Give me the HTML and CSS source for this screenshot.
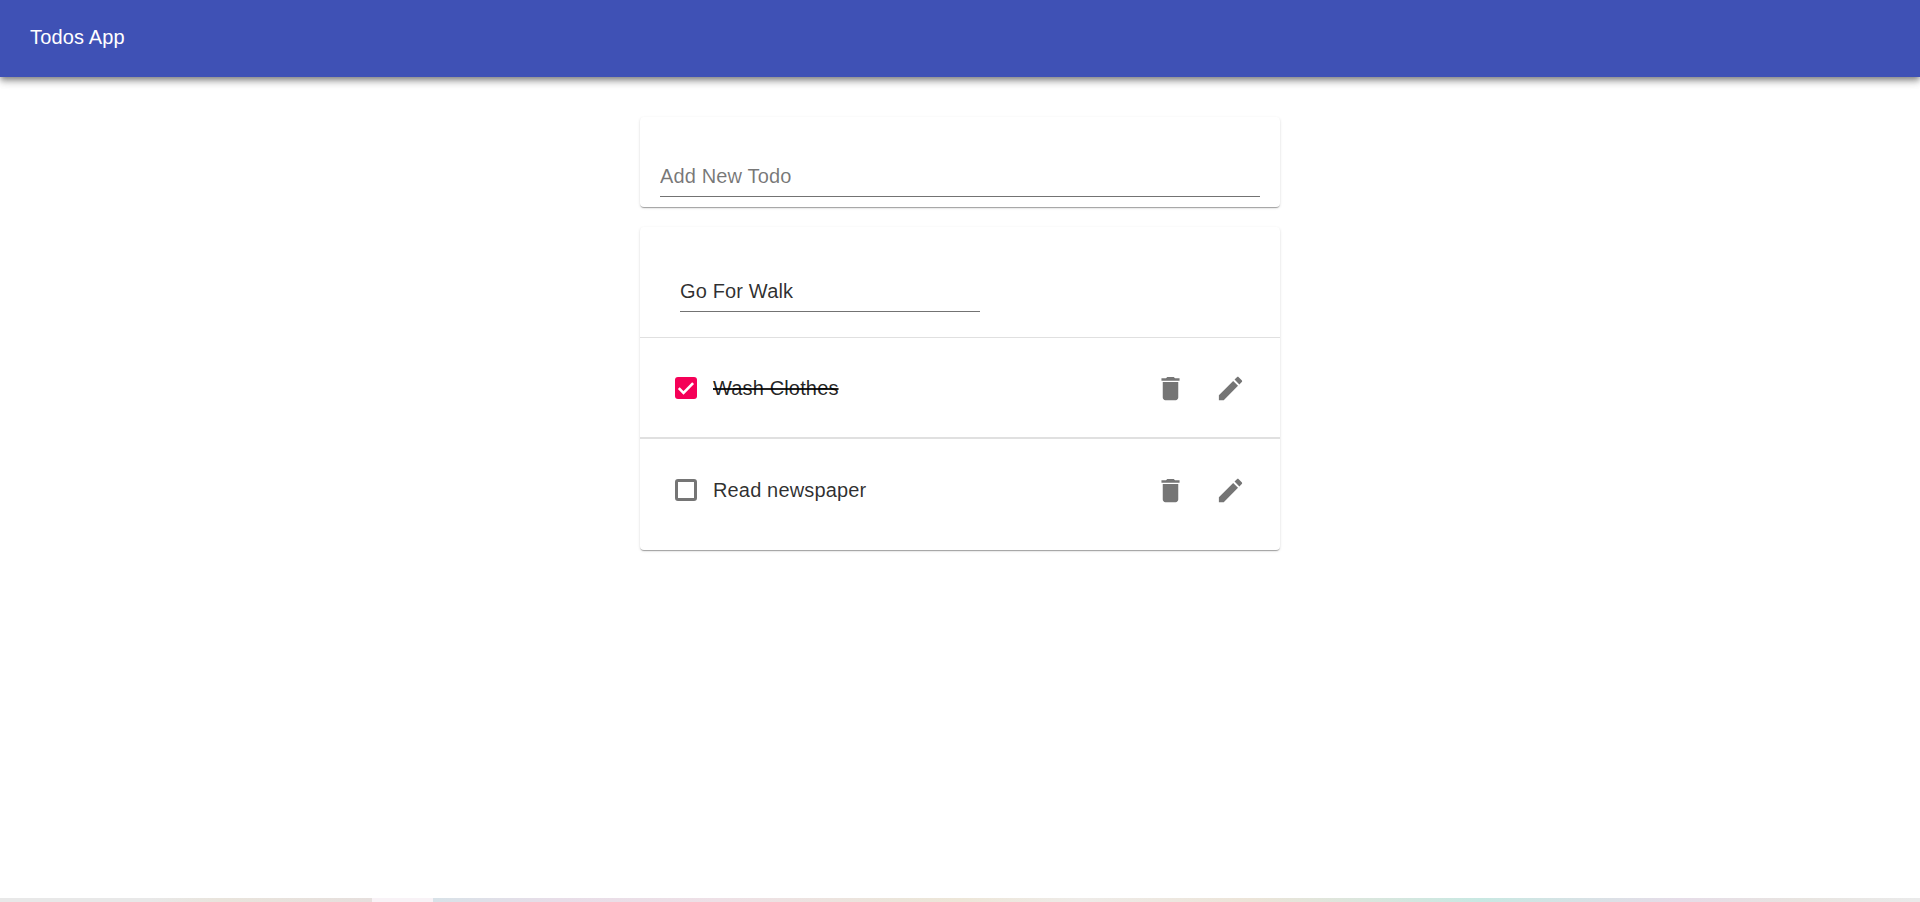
FILE: index.html
```html
<!DOCTYPE html>
<html lang="en">
<head>
<meta charset="utf-8">
<title>Todos App</title>
<link rel="stylesheet" href="styles.css">
</head>
<body>
<div class="page">
  <header class="appbar"><h1 class="appbar-title">Todos App</h1></header>
  <main class="content">
    <section class="card add-card">
      <input class="text-input" type="text" placeholder="Add New Todo">
    </section>
    <section class="card list-card">
      <div class="row edit-row">
        <input class="text-input edit-input" type="text" value="Go For Walk">
      </div>
      <div class="row todo-row">
        <span class="checkbox checked">
          <svg viewBox="0 0 22 22"><path d="M3.800 11.200l4.700 4.700 9.600-9.800" fill="none" stroke="#fff" stroke-width="2.600"/></svg>
        </span>
        <span class="todo-text done">Wash Clothes</span>
        <span class="actions">
          <svg class="icon" viewBox="0 0 24 24"><path d="M6 19c0 1.100.9 2 2 2h8c1.100 0 2-.9 2-2V7H6v12zM19 4h-3.500l-1-1h-5l-1 1H5v2h14V4z"/></svg>
          <svg class="icon" viewBox="0 0 24 24"><path d="M3 17.250V21h3.750L17.810 9.940l-3.750-3.750L3 17.250zM20.710 7.040c.39-.39.39-1.020 0-1.410l-2.340-2.340c-.39-.39-1.020-.39-1.410 0l-1.830 1.830 3.750 3.750 1.830-1.830z"/></svg>
        </span>
      </div>
      <div class="row todo-row last">
        <span class="checkbox"></span>
        <span class="todo-text">Read newspaper</span>
        <span class="actions">
          <svg class="icon" viewBox="0 0 24 24"><path d="M6 19c0 1.100.9 2 2 2h8c1.100 0 2-.9 2-2V7H6v12zM19 4h-3.500l-1-1h-5l-1 1H5v2h14V4z"/></svg>
          <svg class="icon" viewBox="0 0 24 24"><path d="M3 17.250V21h3.750L17.810 9.940l-3.750-3.750L3 17.250zM20.710 7.040c.39-.39.39-1.020 0-1.410l-2.340-2.340c-.39-.39-1.020-.39-1.410 0l-1.830 1.830 3.750 3.750 1.830-1.830z"/></svg>
        </span>
      </div>
    </section>
  </main>
  <div class="strip"><span class="strip-gap"></span></div>
</div>
</body>
</html>
```
FILE: styles.css
```css
* { box-sizing: border-box; }
html, body { margin: 0; height: 100%; background: #fff; }
body {
  font-family: "Liberation Sans", Arial, sans-serif;
  color: rgba(0, 0, 0, 0.82);
  overflow: hidden;
}
.page { display: flex; flex-direction: column; height: 902px; }
.appbar {
  height: 77px;
  flex: none;
  display: flex;
  align-items: center;
  padding: 0 30px;
  background: #3f51b5;
  box-shadow: 0 3px 5px -1px rgba(0,0,0,.3), 0 5px 7px 0 rgba(0,0,0,.2), 0 1px 12px 0 rgba(0,0,0,.14);
  position: relative;
}
.appbar-title { margin: 0 0 3px; font-size: 20px; font-weight: 400; letter-spacing: .15px; color: #fff; line-height: 1.5; }
.content {
  flex: 1;
  width: 640px;
  margin: 0 auto;
  padding-top: 40px;
  display: flex;
  flex-direction: column;
  gap: 20px;
}
.card {
  background: #fff;
  border-radius: 4px;
  box-shadow: 0 2px 1px -1px rgba(0,0,0,.2), 0 1px 1px 0 rgba(0,0,0,.14), 0 1px 3px 0 rgba(0,0,0,.12);
}
.add-card { height: 90px; padding: 35px 20px 0; }
.text-input {
  display: block;
  width: 100%;
  height: 45px;
  padding: 4px 0 0;
  border: 0;
  border-bottom: 1px solid rgba(0,0,0,.55);
  outline: 0;
  background: transparent;
  font: 400 20px "Liberation Sans", Arial, sans-serif;
  letter-spacing: .15px;
  color: rgba(0,0,0,.82);
}
.text-input::placeholder { color: rgba(0,0,0,.54); opacity: 1; }
.list-card { height: 323px; display: flex; flex-direction: column; }
.row { padding: 0 35px; }
.edit-row { height: 111px; padding: 40px 40px 0; border-bottom: 1px solid #e0e0e0; }
.edit-input { width: 300px; }
.todo-row { height: 101px; padding-top: 2px; display: flex; align-items: center; border-bottom: 2px solid #e0e0e0; }
.todo-row.last { border-bottom: 0; height: 110px; padding-top: 0; padding-bottom: 8px; }
.checkbox {
  width: 22px;
  height: 22px;
  flex: none;
  border: 3px solid #757575;
  border-radius: 3px;
  margin-right: 16px;
}
.checkbox.checked { border: 0; background: #f50057; margin-bottom: 2px; }
.checkbox svg { display: block; width: 22px; height: 22px; }
.todo-text { font-size: 20px; letter-spacing: .15px; flex: 1; }
.todo-text.done { text-decoration: line-through; color: rgba(0,0,0,.87); }
.actions { display: flex; align-items: center; gap: 29px; margin-right: -1px; }
.icon { width: 31px; height: 31px; fill: #757575; display: block; }
.strip {
  height: 4px;
  flex: none;
  display: flex;
  background: linear-gradient(90deg, #e8e8e8 0, #e8e8e8 150px, #e9e4dc 220px, #e6dfdd 372px, #d8e2e8 433px, #e8dde8 560px, #eee0e6 720px, #ebe5da 900px, #ede6d8 960px, #eeebe8 1080px, #ece4d8 1250px, #c8e8e2 1480px, #e6dce8 1680px, #e8e4e0 1800px, #eaeaea 1915px);
}
.strip-gap { width: 61px; margin-left: 372px; background: #f8f2f6; }
```
